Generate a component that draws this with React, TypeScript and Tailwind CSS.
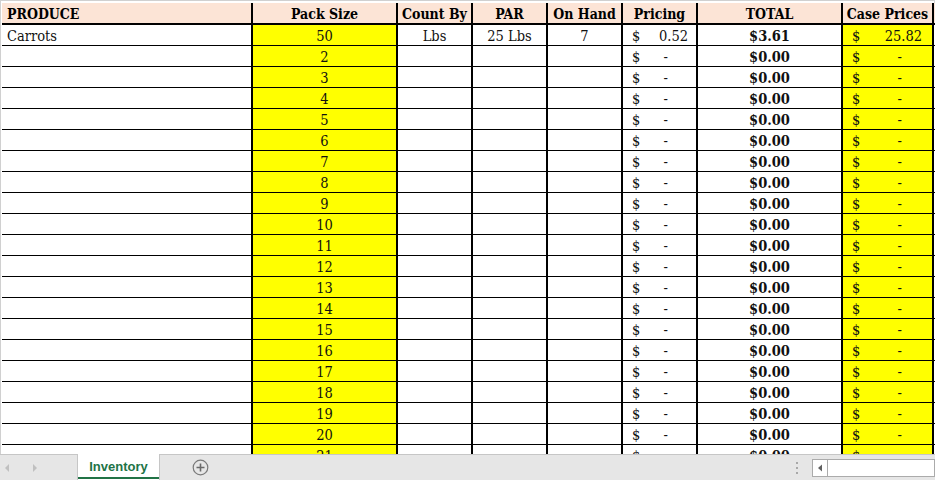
import React from "react";

const serif = {
  fontFamily: '"DejaVu Serif Condensed", "DejaVu Serif", "Liberation Serif", serif',
  fontStretch: "condensed" as const,
};

function Row({ i }: { i: number }) {
  const first = i === 1;
  return (
    <div className="flex h-[21px] border-b border-black text-[14.5px] leading-[16px] text-[#111]">
      <div className="w-[251px] shrink-0 border-r-2 border-black pl-[5px] flex items-end pb-px">
        {first ? "Carrots" : ""}
      </div>
      <div className="w-[145px] shrink-0 border-r-2 border-black bg-[#ffff00] flex items-end pb-px justify-center">
        {first ? "50" : String(i)}
      </div>
      <div className="w-[75px] shrink-0 border-r-2 border-black flex items-end pb-px justify-center">
        {first ? "Lbs" : ""}
      </div>
      <div className="w-[75px] shrink-0 border-r-2 border-black flex items-end pb-px justify-center">
        {first ? "25 Lbs" : ""}
      </div>
      <div className="w-[75px] shrink-0 border-r-2 border-black flex items-end pb-px justify-center">
        {first ? "7" : ""}
      </div>
      <div className="w-[75px] shrink-0 border-r-2 border-black flex items-end pb-px justify-between pl-[9px]">
        <span>$</span>
        {first ? <span className="pr-[8px]">0.52</span> : <span className="pr-[28px]">-</span>}
      </div>
      <div className="w-[145px] shrink-0 border-r-2 border-black flex items-end pb-px justify-center font-bold">
        {first ? "$3.61" : "$0.00"}
      </div>
      <div className="w-[91px] shrink-0 border-r-2 border-black bg-[#ffff00] flex items-end pb-px justify-between pl-[9px]">
        <span>$</span>
        {first ? <span className="pr-[10px]">25.82</span> : <span className="pr-[30px]">-</span>}
      </div>
    </div>
  );
}

export default function App() {
  const rows = Array.from({ length: 21 }, (_, k) => k + 1);
  const headers: [string, string, string][] = [
    ["PRODUCE", "w-[251px]", "justify-start pl-[5px]"],
    ["Pack Size", "w-[145px]", "justify-center"],
    ["Count By", "w-[75px]", "justify-center"],
    ["PAR", "w-[75px]", "justify-center"],
    ["On Hand", "w-[75px]", "justify-center"],
    ["Pricing", "w-[75px]", "justify-center"],
    ["TOTAL", "w-[145px]", "justify-center"],
    ["Case Prices", "w-[91px]", "justify-center"],
  ];
  return (
    <div className="w-[935px] h-[480px] overflow-hidden bg-white flex flex-col">
      <div className="h-[454px] overflow-hidden border-t border-[#d0d0d0] border-l border-l-[#d0d0d0] pl-px" style={serif}>
        <div className="h-[2px] border-r border-[#d0d0d0]" />
        <div className="flex h-[22px] border-b-2 border-black bg-[#fce4d6] text-[14px] leading-[16px] font-bold text-black">
          {headers.map(([t, w, j]) => (
            <div key={t} className={`${w} shrink-0 border-r-2 border-black flex items-end pb-px whitespace-nowrap ${j}`}>
              {t}
            </div>
          ))}
        </div>
        {rows.map((i) => (
          <Row key={i} i={i} />
        ))}
      </div>
      <div
        className="flex-1 flex items-stretch bg-[#e6e6e6] border-t border-[#c6c6c6] relative"
        style={{ fontFamily: '"Liberation Sans", Arial, sans-serif' }}
      >
        <div className="w-[77px] shrink-0 flex items-center">
          <svg width="8" height="10" viewBox="0 0 8 10" className="ml-[3px]">
            <path d="M6 1 L2 5 L6 9 Z" fill="#c0c0c0" />
          </svg>
          <svg width="8" height="10" viewBox="0 0 8 10" className="ml-[20px]">
            <path d="M2 1 L6 5 L2 9 Z" fill="#c0c0c0" />
          </svg>
        </div>
        <div className="w-[83px] shrink-0 -mt-px bg-white border-x border-[#c6c6c6] flex flex-col">
          <div className="flex-1 flex items-center justify-center pt-[2px] text-[13px] font-bold text-[#217346]">
            Inventory
          </div>
          <div className="h-[2px] bg-[#217346] mb-[1px]" />
        </div>
        <div className="w-[80px] shrink-0 flex items-center justify-center">
          <svg width="17" height="17" viewBox="0 0 17 17">
            <circle cx="8.5" cy="8.5" r="7.3" fill="none" stroke="#7a7a7a" strokeWidth="1.2" />
            <path d="M8.5 4.5 V12.5 M4.5 8.5 H12.5" stroke="#6a6a6a" strokeWidth="1.6" />
          </svg>
        </div>
        <div className="flex-1" />
        <div className="w-[15px] shrink-0 flex flex-col items-center justify-center gap-[3px] mr-[8px]">
          <div className="w-[2px] h-[2px] bg-[#a8a8a8]" />
          <div className="w-[2px] h-[2px] bg-[#a8a8a8]" />
          <div className="w-[2px] h-[2px] bg-[#a8a8a8]" />
        </div>
        <div className="w-[123px] shrink-0 flex items-center">
          <div className="h-[18px] w-full flex border border-[#ababab] bg-white">
            <div className="w-[15px] border-r border-[#ababab] flex items-center justify-center">
              <svg width="6" height="8" viewBox="0 0 6 8">
                <path d="M5 0.5 L1 4 L5 7.5 Z" fill="#606060" />
              </svg>
            </div>
            <div className="flex-1" />
          </div>
        </div>
      </div>
    </div>
  );
}
